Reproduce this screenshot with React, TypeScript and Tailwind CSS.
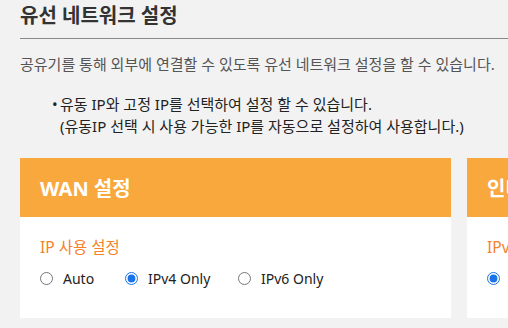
const font = { fontFamily: '"Noto Sans", "Noto Sans CJK KR", sans-serif' };

function Radio({ label, checked, name }: { label: string; checked?: boolean; name: string }) {
  return (
    <label className="flex items-center gap-[10px] text-[14px] text-[#222]">
      <input type="radio" name={name} defaultChecked={checked} className="m-0 h-[13px] w-[13px] accent-[#1a73e8]" />
      <span>{label}</span>
    </label>
  );
}

function Card({ title, sub, children }: { title: string; sub: string; children: React.ReactNode }) {
  return (
    <div className="w-[431px] shrink-0 bg-white">
      <div className="flex h-[59px] items-center bg-[#f9a83e] px-5 pt-[3px] text-[20px] font-bold text-white">{title}</div>
      <div className="px-5 pt-[19px] pb-[29px]">
        <div className="text-[15.5px] leading-[22px] text-[#f5822a]">{sub}</div>
        <div className="mt-[10px] flex items-center">{children}</div>
      </div>
    </div>
  );
}

export default function App() {
  return (
    <div className="h-[328px] w-[508px] overflow-hidden bg-[#f2f2f2] px-5" style={font}>
      <h2 className="pt-[2px] text-[20px] font-bold leading-[28px] text-[#333]">유선 네트워크 설정</h2>
      <div className="mt-[8px] -mr-5 border-t border-[#888]" />
      <p className="mt-[14px] whitespace-nowrap text-[15px] leading-[22px] text-[#555]">
        공유기를 통해 외부에 연결할 수 있도록 유선 네트워크 설정을 할 수 있습니다.
      </p>
      <div className="mt-[18px] pl-8 text-[15px] leading-[22px] text-[#222]">
        <div className="flex">
          <span className="w-2">•</span>
          <span>유동 IP와 고정 IP를 선택하여 설정 할 수 있습니다.</span>
        </div>
        <div className="pl-2 whitespace-nowrap">(유동IP 선택 시 사용 가능한 IP를 자동으로 설정하여 사용합니다.)</div>
      </div>
      <div className="mt-[21px] flex gap-4">
        <Card title="WAN 설정" sub="IP 사용 설정">
          <div className="w-[85px]"><Radio name="wan" label="Auto" /></div>
          <div className="w-[113px]"><Radio name="wan" label="IPv4 Only" checked /></div>
          <Radio name="wan" label="IPv6 Only" />
        </Card>
        <Card title="인터넷 연결 설정" sub="IPv4 연결 방식">
          <div className="w-[85px]"><Radio name="lan" label="유동 IP" checked /></div>
          <Radio name="lan" label="고정 IP" />
        </Card>
      </div>
    </div>
  );
}
